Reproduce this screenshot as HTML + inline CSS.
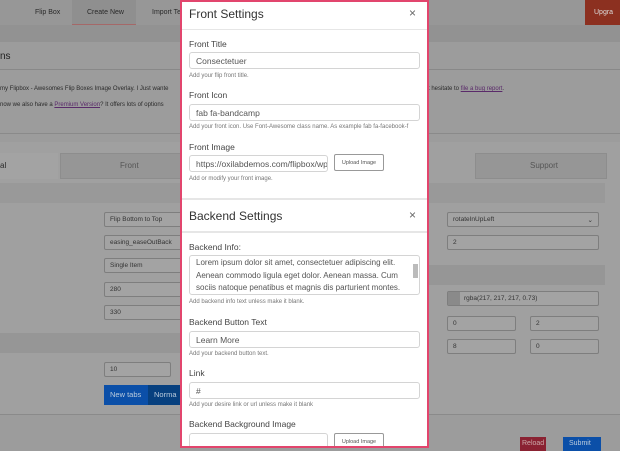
<!DOCTYPE html>
<html><head><style>
*{box-sizing:border-box;margin:0;padding:0}
body{width:620px;height:448px;overflow:hidden;background:#9c9c9c;font-family:"Liberation Sans",sans-serif;position:relative;color:#333}
.a{position:absolute}
.bg{font-size:7px;color:#2a2a2a}
.fld{position:absolute;border:1px solid #7e7e7e;background:#a3a3a3;font-size:6.5px;color:#333;padding:0 5px;display:flex;align-items:center;border-radius:2px}
.modal{position:absolute;left:180px;top:0;width:249px;height:448px;background:#fff;border:2px solid #e2456d;overflow:hidden}
.m{position:absolute;left:7px}
.h{font-size:12px;color:#333}
.lab{font-size:8.5px;color:#444}
.help{font-size:6px;color:#777}
.in{position:absolute;left:7px;width:231px;height:17px;border:1px solid #d4d4d4;border-radius:3px;font-size:8.5px;color:#555;padding:0 6px;display:flex;align-items:center}
.x{position:absolute;left:227px;font-size:12px;color:#666}
.sep{position:absolute;left:0;width:246px;height:1px;background:#e6e6e6}
.up{position:absolute;left:152px;width:50px;height:17px;border:1px solid #999;border-radius:2px;font-size:5.5px;color:#555;display:flex;align-items:center;justify-content:center}
</style></head><body>
<div class="a" style="left:0;top:0;width:620px;height:25px;background:#979797"></div>
<div class="a" style="left:72px;top:0;width:64px;height:25px;background:#8f8f8f;border-bottom:1px solid #a56868"></div>
<div class="a bg" style="left:35px;top:9px">Flip Box</div>
<div class="a bg" style="left:87px;top:9px">Create New</div>
<div class="a bg" style="left:152px;top:9px">Import Te</div>
<div class="a" style="left:585px;top:0;width:35px;height:25px;background:#8c3020;color:#ddd;font-size:7px;padding:9px 0 0 9px">Upgra</div>
<div class="a" style="left:0;top:25px;width:620px;height:17px;background:#929292"></div>
<div class="a" style="left:0;top:51px;font-size:10px;color:#222">ns</div>
<div class="a" style="left:0;top:69px;width:620px;height:1px;background:#888"></div>
<div class="a bg" style="left:0;top:86px;font-size:6px">my Flipbox - Awesomes Flip Boxes Image Overlay. I Just wante</div>
<div class="a bg" style="left:428px;top:86px;font-size:6px">t hesitate to <u style="color:#5a2a6a">file a bug report</u>.</div>
<div class="a bg" style="left:0;top:102px;font-size:6px">now we also have a <u style="color:#5a2a6a">Premium Version</u>? It offers lots of options</div>
<div class="a" style="left:0;top:133px;width:620px;height:1px;background:#8a8a8a"></div>
<div class="a" style="left:0;top:142px;width:620px;height:272px;background:#a0a0a0"></div>
<div class="a" style="left:0;top:153px;width:58px;height:26px;background:#a3a3a3"></div>
<div class="a" style="left:60px;top:153px;width:121px;height:26px;background:#969696;border:1px solid #8d8d8d"></div>
<div class="a" style="left:475px;top:153px;width:132px;height:26px;background:#969696;border:1px solid #8d8d8d"></div>
<div class="a bg" style="left:0;top:161px;font-size:8px">al</div>
<div class="a bg" style="left:120px;top:161px;font-size:8px;color:#555">Front</div>
<div class="a bg" style="left:530px;top:161px;font-size:8px;color:#555">Support</div>
<div class="a" style="left:0;top:183px;width:605px;height:20px;background:#999"></div>
<div class="fld" style="left:104px;top:212px;width:78px;height:15px">Flip Bottom to Top</div>
<div class="fld" style="left:104px;top:235px;width:78px;height:15px">easing_easeOutBack</div>
<div class="fld" style="left:104px;top:258px;width:78px;height:15px">Single Item</div>
<div class="fld" style="left:104px;top:282px;width:78px;height:15px">280</div>
<div class="fld" style="left:104px;top:305px;width:78px;height:15px">330</div>
<div class="a" style="left:0;top:333px;width:181px;height:20px;background:#969696"></div>
<div class="fld" style="left:104px;top:362px;width:67px;height:15px">10</div>
<div class="a" style="left:104px;top:385px;width:44px;height:20px;background:#0b4fa8;color:#bcd;font-size:7.5px;padding:5px 0 0 6px">New tabs</div>
<div class="a" style="left:148px;top:385px;width:33px;height:20px;background:#07407f;color:#bcd;font-size:7.5px;padding:5px 0 0 6px">Norma</div>
<div class="fld" style="left:447px;top:212px;width:152px;height:15px">rotateInUpLeft<span style="margin-left:auto">⌄</span></div>
<div class="fld" style="left:447px;top:235px;width:152px;height:15px">2</div>
<div class="a" style="left:428px;top:265px;width:177px;height:20px;background:#969696"></div>
<div class="fld" style="left:447px;top:291px;width:152px;height:15px;padding-left:0"><span style="display:inline-block;width:12px;height:13px;background:#8a8a8a;margin-right:4px"></span>rgba(217, 217, 217, 0.73)</div>
<div class="fld" style="left:447px;top:316px;width:69px;height:15px">0</div>
<div class="fld" style="left:530px;top:316px;width:69px;height:15px">2</div>
<div class="fld" style="left:447px;top:339px;width:69px;height:15px">8</div>
<div class="fld" style="left:530px;top:339px;width:69px;height:15px">0</div>
<div class="a" style="left:0;top:414px;width:620px;height:1px;background:#8a8a8a"></div>
<div class="a" style="left:520px;top:437px;width:26px;height:14px;background:#8a2232;color:#caa;font-size:7px;padding:3px 0 0 2px">Reload</div>
<div class="a" style="left:563px;top:437px;width:38px;height:14px;background:#0b4fa8;color:#bcd;font-size:7px;padding:3px 0 0 6px">Submit</div>

<div class="modal">
<div class="m h" style="top:5px">Front Settings</div>
<div class="x" style="top:4px">×</div>
<div class="sep" style="top:27px"></div>
<div class="m lab" style="top:37px">Front Title</div>
<div class="in" style="top:50px">Consectetuer</div>
<div class="m help" style="top:71px">Add your flip front title.</div>
<div class="m lab" style="top:88px">Front Icon</div>
<div class="in" style="top:102px">fab fa-bandcamp</div>
<div class="m help" style="top:122px">Add your front icon. Use Font-Awesome class name. As example fab fa-facebook-f</div>
<div class="m lab" style="top:140px">Front Image</div>
<div class="in" style="top:153px;width:139px;overflow:hidden;white-space:nowrap">https://oxilabdemos.com/flipbox/wp-</div>
<div class="up" style="top:152px">Upload Image</div>
<div class="m help" style="top:174px">Add or modify your front image.</div>
<div class="sep" style="top:196px;height:2px"></div>
<div class="m h" style="top:207px">Backend Settings</div>
<div class="x" style="top:206px">×</div>
<div class="sep" style="top:229px;height:2px"></div>
<div class="m lab" style="top:240px">Backend Info:</div>
<div class="in" style="top:253px;height:40px;font-size:8px;line-height:12.5px;align-items:flex-start;padding-top:1px;color:#555">Lorem ipsum dolor sit amet, consectetuer adipiscing elit. Aenean commodo ligula eget dolor. Aenean massa. Cum sociis natoque penatibus et magnis dis parturient montes.</div>
<div class="a" style="left:231px;top:262px;width:5px;height:14px;background:#bbb"></div>
<div class="m help" style="top:297px">Add backend info text unless make it blank.</div>
<div class="m lab" style="top:315px">Backend Button Text</div>
<div class="in" style="top:329px">Learn More</div>
<div class="m help" style="top:349px">Add your backend button text.</div>
<div class="m lab" style="top:366px">Link</div>
<div class="in" style="top:380px">#</div>
<div class="m help" style="top:400px">Add your desire link or url unless make it blank</div>
<div class="m lab" style="top:417px">Backend Background Image</div>
<div class="in" style="top:431px;width:139px"></div>
<div class="up" style="top:431px">Upload Image</div>
</div>
</body></html>
